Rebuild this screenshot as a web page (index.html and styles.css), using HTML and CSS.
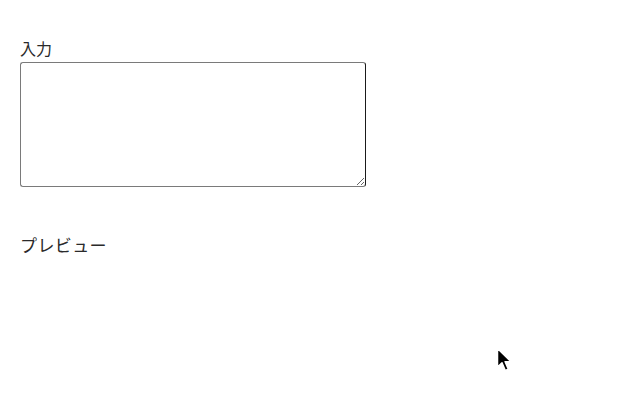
FILE: index.html
```html
<!DOCTYPE html>
<html lang="ja">
<head>
<meta charset="utf-8">
<link rel="stylesheet" href="styles.css">
</head>
<body>
<main class="page">
  <section class="field">
    <label class="label" for="input">入力</label>
    <textarea id="input" class="input"></textarea>
  </section>
  <section class="preview">
    <div class="label label-lg">プレビュー</div>
    <div class="preview-body"></div>
  </section>
</main>
<svg class="cursor" width="20" height="28" viewBox="0 0 20 28">
  <path d="M1.5 1.5 L1.5 20 L6 15.8 L9.3 23.5 L12.3 22.2 L9.1 14.7 L15 14.7 Z" fill="#000" stroke="#fff" stroke-width="1.5" stroke-linejoin="round"/>
</svg>
</body>
</html>
```
FILE: styles.css
```css
html, body {
  margin: 0;
  padding: 0;
  background: #fff;
}
body {
  font-family: "Noto Sans CJK JP", "Noto Sans", sans-serif;
  font-size: 16px;
  color: #2a2a2a;
}
.page {
  display: flex;
  flex-direction: column;
  gap: 46px;
  padding: 36px 20px 0;
}
.field {
  display: flex;
  flex-direction: column;
  align-items: flex-start;
}
.label {
  display: block;
  line-height: 24px;
  height: 26px;
}
.label-lg {
  font-size: 17px;
  letter-spacing: 0.4px;
}
.input {
  box-sizing: border-box;
  width: 346px;
  height: 125px;
  margin: 0;
  border: 1px solid #7a7a7a;
  border-right-color: #1a1a1a;
  border-radius: 3px;
  background: #fff;
}
.preview {
  display: flex;
  flex-direction: column;
}
.cursor {
  position: absolute;
  left: 496px;
  top: 347px;
}
```
